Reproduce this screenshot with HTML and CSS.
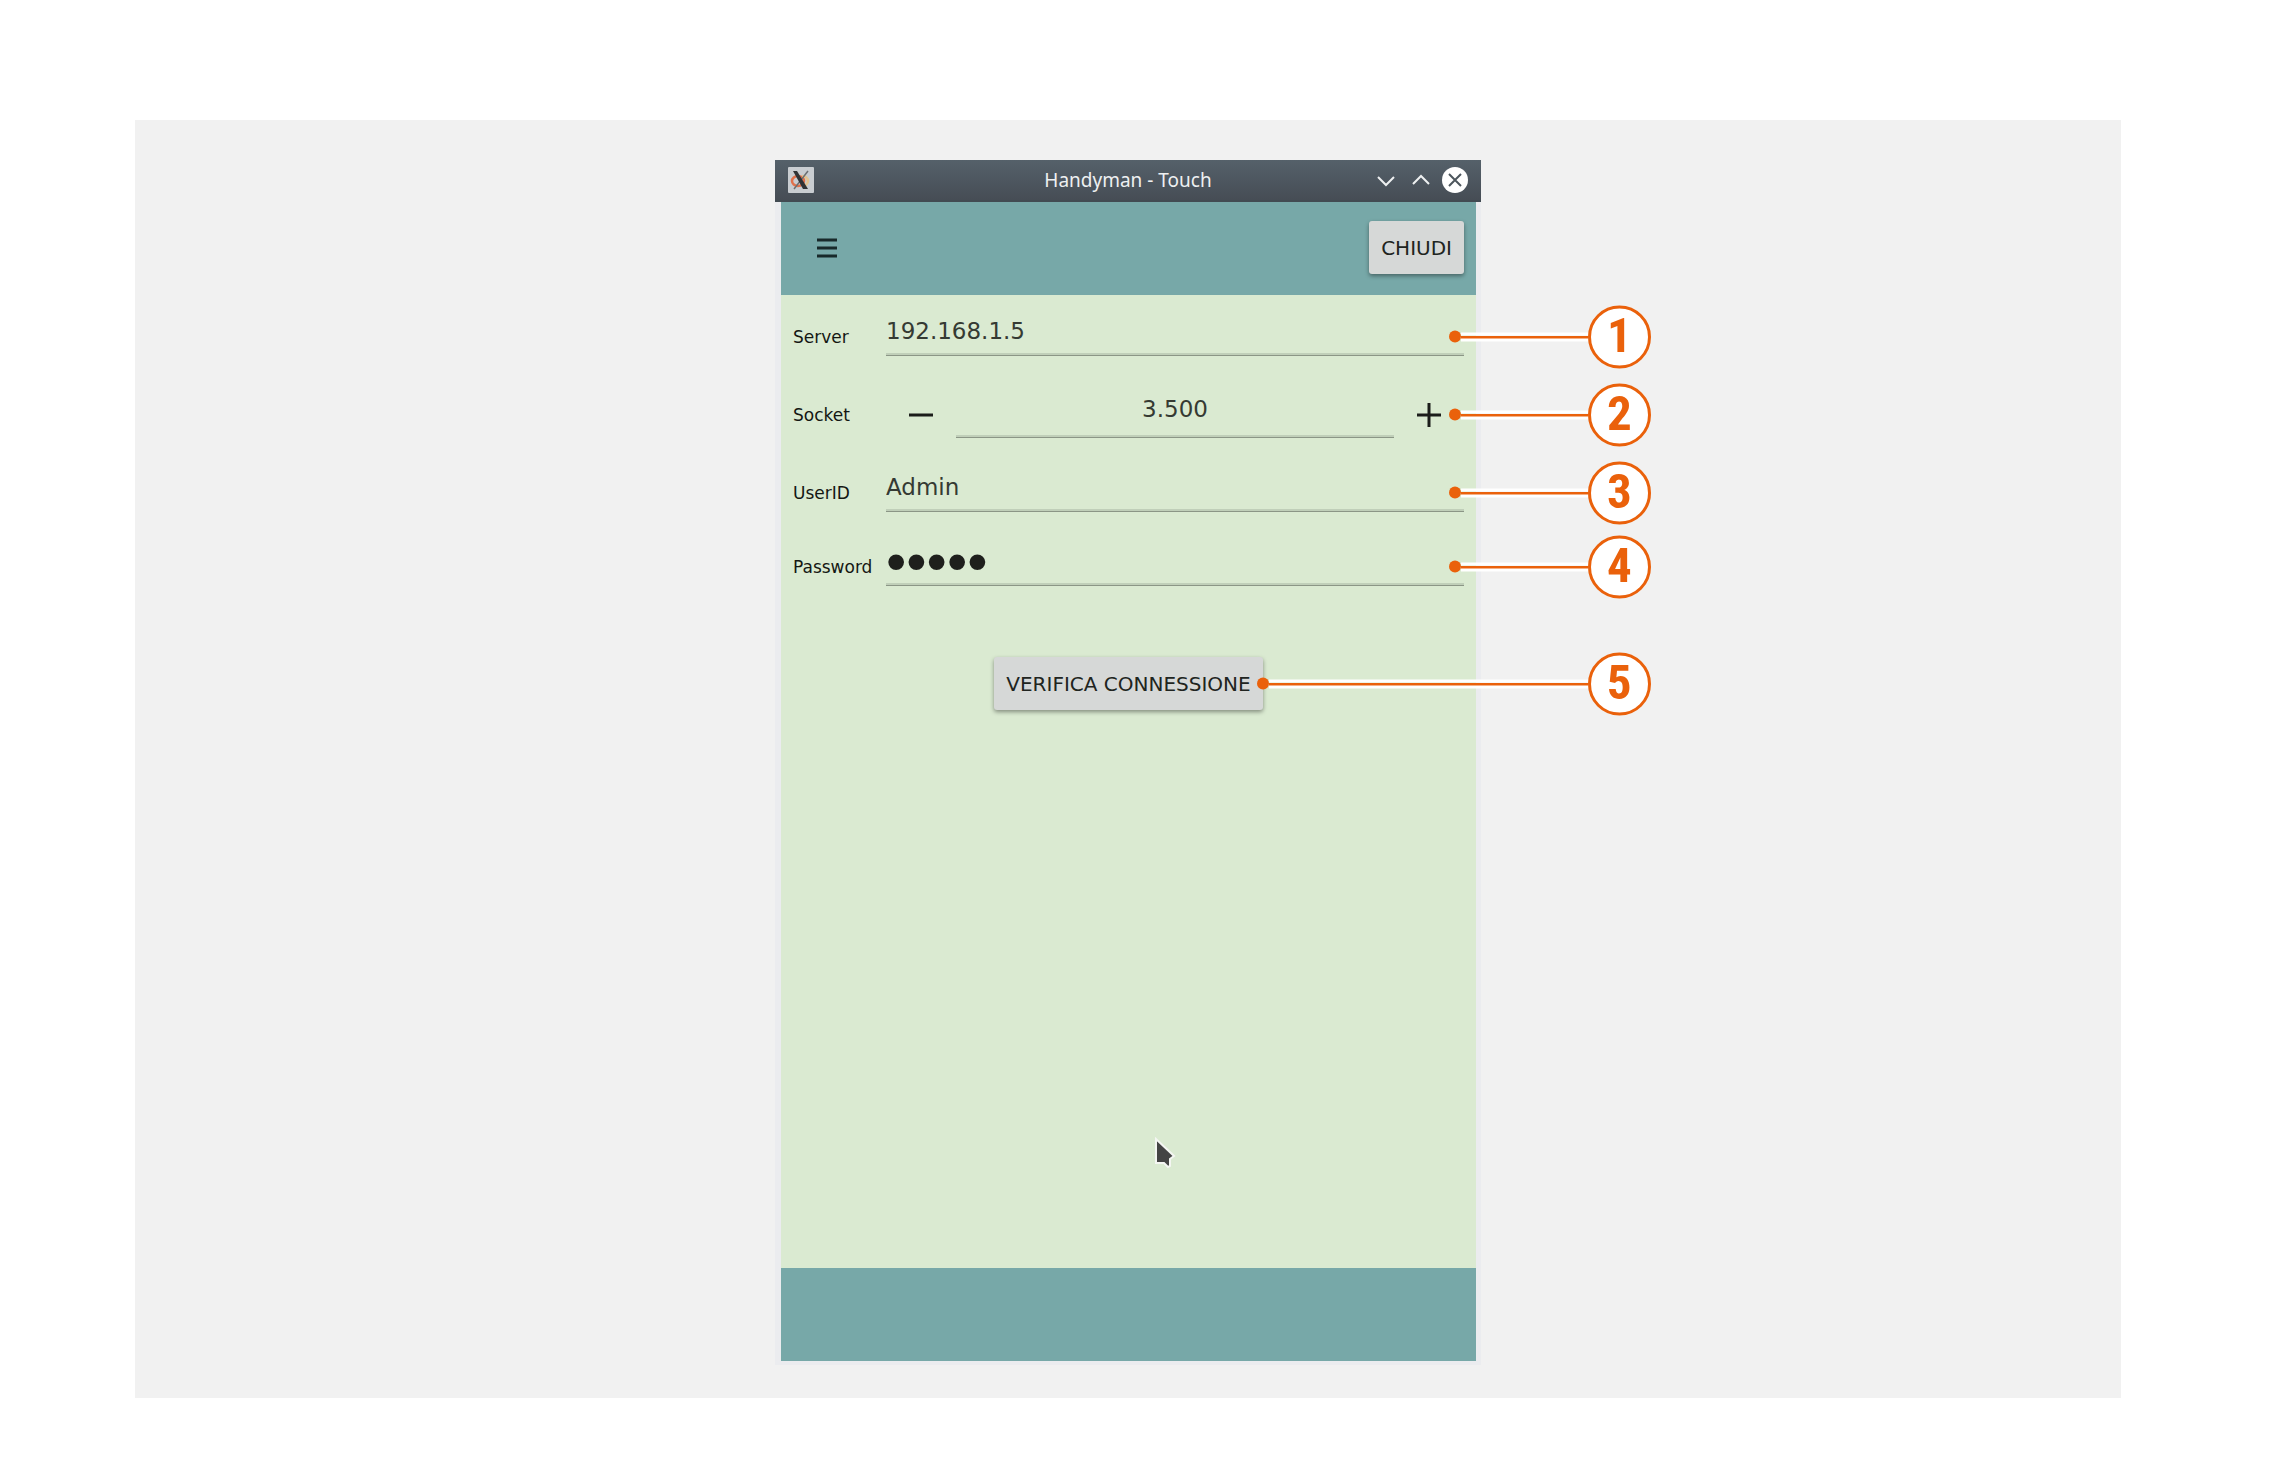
FILE: index.html
```html
<!DOCTYPE html>
<html lang="it">
<head>
  <meta charset="UTF-8">
  <meta name="viewport" content="width=device-width, initial-scale=1.0">
  <title>Handyman - Touch</title>
  <link rel="stylesheet" href="styles.css">
</head>
<body>
  <main class="figure">
    <div class="window">
      <header class="titlebar">
        <svg class="app-icon" viewBox="0 0 26 26" aria-hidden="true">
          <rect width="26" height="26" rx="1" fill="#c9cdd1"/>
          <ellipse cx="10" cy="14" rx="6" ry="5" fill="none" stroke="#e0714b" stroke-width="2.5"/>
          <path d="M14 9a6 5 0 1 1 0 10" fill="none" stroke="#e3c48f" stroke-width="2.5"/>
          <path d="M20 4L6 22" stroke="#6c6f72" stroke-width="1.5"/>
          <path d="M5 4h4l11 18h-5z" fill="#2f3336"/>
        </svg>
        <h1>Handyman - Touch</h1>
        <div class="window-buttons">
          <button type="button" aria-label="Riduci">
            <svg viewBox="0 0 26 26"><path d="M6 10l8 8 8-8" fill="none" stroke="#eef0f1" stroke-width="2"/></svg>
          </button>
          <button type="button" aria-label="Ingrandisci">
            <svg viewBox="0 0 26 26"><path d="M6 17l8-8 8 8" fill="none" stroke="#eef0f1" stroke-width="2"/></svg>
          </button>
          <button type="button" aria-label="Chiudi finestra">
            <svg viewBox="0 0 26 26"><circle cx="13" cy="13" r="13" fill="#fff"/><path d="M7 7l12 12M19 7L7 19" stroke="#4d565d" stroke-width="2"/></svg>
          </button>
        </div>
      </header>

      <div class="app">
        <div class="toolbar">
          <button class="menu" type="button" aria-label="Menu">
            <svg viewBox="0 0 20 20"><path d="M0 2h20M0 10h20M0 18h20" stroke="#18292a" stroke-width="3"/></svg>
          </button>
          <button class="btn" type="button">CHIUDI</button>
        </div>

        <form class="settings">
          <div class="row">
            <label for="server">Server</label>
            <input id="server" type="text" value="192.168.1.5">
            <div class="callout"><span class="line"></span><span class="number">1</span></div>
          </div>
          <div class="row">
            <label for="socket">Socket</label>
            <button class="step" type="button" aria-label="Diminuisci">
              <svg viewBox="0 0 24 24"><path d="M0 12h24" stroke="#1b1d1a" stroke-width="3"/></svg>
            </button>
            <input id="socket" class="spin" type="text" value="3.500">
            <button class="step" type="button" aria-label="Aumenta">
              <svg viewBox="0 0 24 24"><path d="M0 12h24M12 0v24" stroke="#1b1d1a" stroke-width="3"/></svg>
            </button>
            <div class="callout"><span class="line"></span><span class="number">2</span></div>
          </div>
          <div class="row">
            <label for="user">UserID</label>
            <input id="user" type="text" value="Admin">
            <div class="callout"><span class="line"></span><span class="number">3</span></div>
          </div>
          <div class="row">
            <label for="password">Password</label>
            <input id="password" class="secret" type="password" value="admin">
            <div class="callout"><span class="line"></span><span class="number">4</span></div>
          </div>
          <div class="action">
            <button class="btn" type="button">VERIFICA CONNESSIONE</button>
            <div class="callout callout-long"><span class="line"></span><span class="number">5</span></div>
          </div>
          <svg class="cursor" viewBox="0 0 22 32" aria-hidden="true">
            <path d="M2 2v24h8l4 4 2-1v-7l4-3z" fill="#444" stroke="#f4f6f2" stroke-width="2"/>
          </svg>
        </form>

        <footer class="bottombar"></footer>
      </div>
    </div>
  </main>
</body>
</html>
```

FILE: styles.css
```css
* {
  box-sizing: border-box;
}

body {
  margin: 0;
  padding: 120px 167px 76px 135px;
  background-color: #fff;
  font-family: "DejaVu Sans", sans-serif;
  color: #202420;
}

button {
  padding: 0;
  border: none;
  background: none;
  font-family: inherit;
  color: inherit;
  cursor: pointer;
}

svg {
  display: block;
}

.figure {
  display: flex;
  justify-content: center;
  padding: 40px 0 33px;
  background-color: #f1f1f1;
}

.window {
  width: 100%;
  max-width: 706px;
}

/* window frame */
.titlebar {
  display: grid;
  grid-template-columns: 1fr auto 1fr;
  align-items: center;
  height: 42px;
  padding: 0 13px;
  background: linear-gradient(#55616a, #464d55);
  border-bottom: 2px solid #424b52;
}

.titlebar h1 {
  margin: 0;
  font-family: "Noto Sans", sans-serif;
  font-size: 19px;
  font-weight: normal;
  color: #eef0f1;
}

.app-icon {
  width: 26px;
  height: 26px;
}

.window-buttons {
  display: flex;
  justify-content: flex-end;
  gap: 9px;
}

.window-buttons svg {
  width: 26px;
  height: 26px;
}

.app {
  border: solid #ebecef;
  border-width: 0 5px 4px 6px;
}

.toolbar {
  display: flex;
  align-items: center;
  justify-content: space-between;
  height: 93px;
  padding: 0 12px 2px 36px;
  background-color: #77a8a8;
}

.menu svg {
  width: 20px;
  height: 20px;
}

.btn {
  height: 53px;
  padding: 0 12px;
  border-radius: 3px;
  background-color: #d6d8d7;
  box-shadow: 0 2px 4px rgba(0, 0, 0, 0.4);
  font-size: 20px;
}

/* connection form */
.settings {
  position: relative;
  display: flex;
  flex-direction: column;
  gap: 35px;
  min-height: 973px;
  padding: 22px 12px;
  background-color: #daead1;
}

.row {
  position: relative;
  display: flex;
  align-items: center;
}

.row label {
  width: 93px;
  font-size: 17px;
  color: #141713;
}

.row input {
  flex: 1;
  min-width: 0;
  height: 39px;
  padding: 0 0 11px;
  border: none;
  border-bottom: 1px solid #8b9686;
  border-radius: 0;
  outline: none;
  background: none;
  box-shadow: inset 0 -2px #c0cfb9;
  font-family: inherit;
  font-size: 23px;
  color: #353a33;
}

.row .spin {
  height: 47px;
  text-align: center;
}

.row .secret {
  font-family: "Liberation Sans", sans-serif;
  font-size: 58px;
  color: #1e1f1c;
}

.step {
  display: flex;
  justify-content: center;
  width: 70px;
}

.step svg {
  width: 24px;
  height: 24px;
}

.action {
  position: relative;
  align-self: center;
  margin-top: 36px;
}

.bottombar {
  height: 93px;
  background-color: #77a8a8;
}

/* numbered callouts */
.callout {
  position: absolute;
  top: 50%;
  left: calc(100% - 15px);
  display: flex;
  align-items: center;
  width: 202px;
  transform: translateY(-50%);
  color: #ea610b;
}

.callout-long {
  left: calc(100% - 6px);
  width: 394px;
}

.callout::before {
  content: "";
  width: 12px;
  height: 12px;
  border-radius: 50%;
  background-color: currentColor;
}

.line {
  flex: 1;
  height: 9px;
  border: solid #fff;
  border-width: 3px 0;
  background-color: currentColor;
  background-clip: padding-box;
}

.number {
  display: flex;
  align-items: center;
  justify-content: center;
  width: 63px;
  height: 63px;
  padding-bottom: 4px;
  border: 3px solid currentColor;
  border-radius: 50%;
  background-color: #fff;
  font-family: "Liberation Sans Narrow", "Roboto Condensed", "Liberation Sans", sans-serif;
  font-size: 49px;
  font-weight: bold;
  line-height: 1;
}

.cursor {
  position: absolute;
  top: 842px;
  left: 373px;
  width: 22px;
  height: 32px;
}
```
